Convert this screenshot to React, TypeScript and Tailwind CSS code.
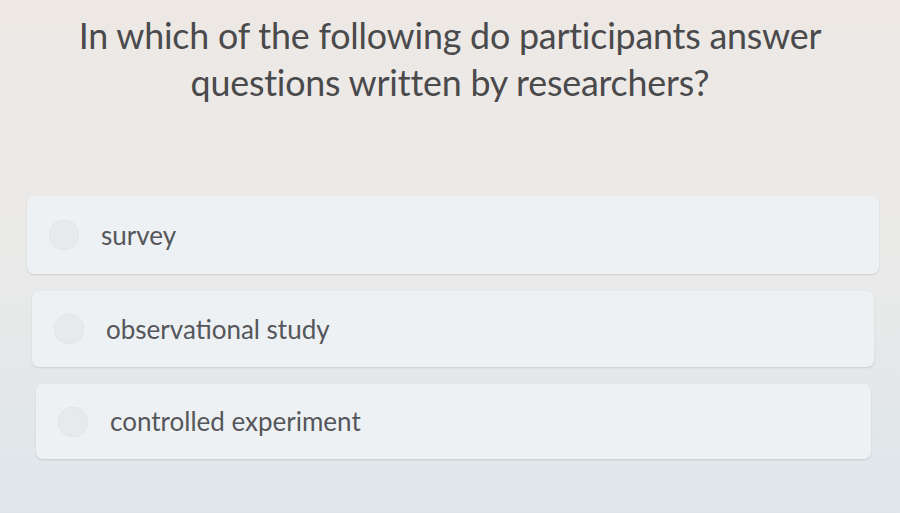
import React from 'react'

const options = ['survey', 'observational study', 'controlled experiment']

const margins = ['ml-[27px] mr-[21px]', 'ml-[32px] mr-[26px]', 'ml-[36px] mr-[29px]']
const heights = ['h-[78px]', 'h-[76px]', 'h-[75px]']

export default function App() {
  return (
    <div
      className="w-[900px] h-[513px] overflow-hidden bg-gradient-to-b from-[#ede8e4] via-[#eaeae9] to-[#dee6ea] text-[#4a4a4c]"
      style={{ fontFamily: 'Lato, "Open Sans", sans-serif' }}
    >
      <h1 className="pt-[12px] text-center text-[35.8px] leading-[47px] font-normal tracking-[-0.2px]">
        In which of the following do participants answer
        <br />
        questions written by researchers?
      </h1>

      <div className="mt-[90px] flex flex-col gap-[17px]">
        {options.map((opt, i) => (
          <label
            key={opt}
            className={`${margins[i]} ${heights[i]} pl-[22px] flex items-center rounded-[7px] bg-[#eef1f4] shadow-[0_1px_2px_rgba(0,0,0,0.12)] cursor-pointer`}
          >
            <span className="w-[30px] h-[30px] rounded-full bg-[#e7eaec] shadow-[inset_0_0_1px_rgba(0,0,0,0.12)]" />
            <span className="ml-[22px] text-[26px] text-[#55575a]">{opt}</span>
          </label>
        ))}
      </div>
    </div>
  )
}
